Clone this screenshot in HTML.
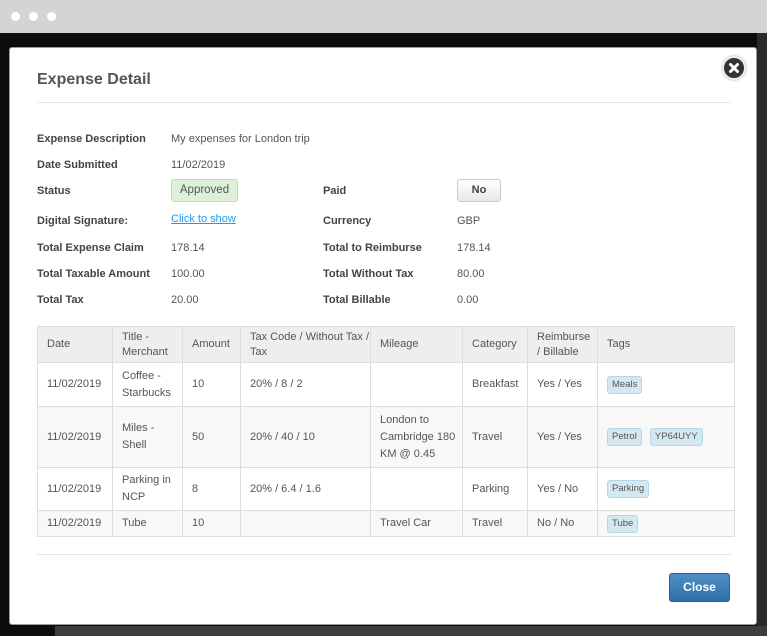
<!DOCTYPE html>
<html><head><meta charset="utf-8"><style>
*{margin:0;padding:0;box-sizing:border-box}
body{width:767px;height:636px;overflow:hidden;background:#0c0d0f;font-family:"Liberation Sans",Arial,sans-serif;color:#555;position:relative}
.top{position:absolute;left:0;top:0;width:767px;height:33px;background:#d4d4d4}
.dot{position:absolute;top:12px;width:9px;height:9px;border-radius:50%;background:#fff}
.bot{position:absolute;left:55px;top:626px;width:712px;height:10px;background:#3c3d3f}
.side{position:absolute;left:757px;top:33px;width:10px;height:603px;background:#2a2a2a}
.modal{position:absolute;left:9px;top:47px;width:748px;height:578px;background:#fff;border:1px solid #999;border-radius:3px}
.a{position:absolute;font-size:11px;line-height:14px;white-space:nowrap}
.b{font-weight:bold;color:#444}
.hr{position:absolute;left:37px;width:694px;height:1px;background:#e5e5e5}
table{position:absolute;left:37px;top:326px;width:697px;border-collapse:collapse;table-layout:fixed;font-size:11px;color:#555}
td,th{border:1px solid #ddd;padding:0 2px 0 9px;text-align:left;font-weight:normal;line-height:17px;vertical-align:middle;overflow:hidden}
th{background:#eeeeee;height:36px;line-height:15px}
tr.s td{background:#f8f8f8}
.tag{display:inline-block;background:#d3e8f1;border:1px solid #b5d6e6;border-radius:3px;font-size:9.5px;line-height:14px;padding:1px 4px;color:#555;margin-right:5px}
</style></head><body>
<div class="top"><div class="dot" style="left:11px"></div><div class="dot" style="left:29px"></div><div class="dot" style="left:47px"></div></div>
<div class="side"></div><div class="bot"></div>
<div class="modal"></div>
<div style="position:absolute;left:722px;top:56px;width:24px;height:24px;border-radius:50%;background:#333;border:2px solid #eee;box-shadow:0 0 2px #aaa"><svg width="20" height="20" viewBox="0 0 20 20" style="position:absolute;left:0;top:0"><path d="M6.5 6.5L13.5 13.5M13.5 6.5L6.5 13.5" stroke="#fff" stroke-width="3" stroke-linecap="round"/></svg></div>
<div class="a b" style="left:37px;top:70px;font-size:16px;line-height:20px;color:#555">Expense Detail</div>
<div class="hr" style="top:102px"></div>

<div class="a b" style="left:37px;top:132px">Expense Description</div><div class="a" style="left:171px;top:132px">My expenses for London trip</div>
<div class="a b" style="left:37px;top:158px">Date Submitted</div><div class="a" style="left:171px;top:158px">11/02/2019</div>
<div class="a b" style="left:37px;top:184px">Status</div>
<div class="a" style="left:171px;top:179px;width:67px;height:23px;background:#dff0d8;border:1px solid #b9dfa8;border-radius:3px;text-align:center;line-height:21px;font-size:11.5px">Approved</div>
<div class="a b" style="left:323px;top:184px">Paid</div>
<div class="a b" style="left:457px;top:179px;width:44px;height:23px;background:linear-gradient(#fff,#e8e8e8);border:1px solid #ccc;border-radius:3px;text-align:center;line-height:21px">No</div>
<div class="a b" style="left:37px;top:214px">Digital Signature:</div><div class="a" style="left:171px;top:212px;color:#1a9cf0;text-decoration:underline">Click to show</div>
<div class="a b" style="left:323px;top:214px">Currency</div><div class="a" style="left:457px;top:214px">GBP</div>
<div class="a b" style="left:37px;top:241px">Total Expense Claim</div><div class="a" style="left:171px;top:241px">178.14</div>
<div class="a b" style="left:323px;top:241px">Total to Reimburse</div><div class="a" style="left:457px;top:241px">178.14</div>
<div class="a b" style="left:37px;top:267px">Total Taxable Amount</div><div class="a" style="left:171px;top:267px">100.00</div>
<div class="a b" style="left:323px;top:267px">Total Without Tax</div><div class="a" style="left:457px;top:267px">80.00</div>
<div class="a b" style="left:37px;top:293px">Total Tax</div><div class="a" style="left:171px;top:293px">20.00</div>
<div class="a b" style="left:323px;top:293px">Total Billable</div><div class="a" style="left:457px;top:293px">0.00</div>

<table>
<colgroup><col style="width:75px"><col style="width:70px"><col style="width:58px"><col style="width:130px"><col style="width:92px"><col style="width:65px"><col style="width:70px"><col style="width:137px"></colgroup>
<tr style="height:36px"><th>Date</th><th>Title -<br>Merchant</th><th>Amount</th><th style="white-space:nowrap">Tax Code / Without Tax /<br>Tax</th><th>Mileage</th><th>Category</th><th>Reimburse<br>/ Billable</th><th>Tags</th></tr>
<tr style="height:44px"><td>11/02/2019</td><td>Coffee -<br>Starbucks</td><td>10</td><td>20% / 8 / 2</td><td></td><td>Breakfast</td><td>Yes / Yes</td><td><span class="tag">Meals</span></td></tr>
<tr class="s" style="height:61px"><td>11/02/2019</td><td>Miles -<br>Shell</td><td>50</td><td>20% / 40 / 10</td><td style="white-space:nowrap">London to<br>Cambridge 180<br>KM @ 0.45</td><td>Travel</td><td>Yes / Yes</td><td style="white-space:nowrap"><span class="tag">Petrol</span> <span class="tag">YP64UYY</span></td></tr>
<tr style="height:43px"><td>11/02/2019</td><td>Parking in<br>NCP</td><td>8</td><td>20% / 6.4 / 1.6</td><td></td><td>Parking</td><td>Yes / No</td><td><span class="tag">Parking</span></td></tr>
<tr class="s" style="height:26px"><td>11/02/2019</td><td>Tube</td><td>10</td><td></td><td>Travel Car</td><td>Travel</td><td>No / No</td><td><span class="tag">Tube</span></td></tr>
</table>
<div class="hr" style="top:554px"></div>
<div class="a b" style="left:669px;top:573px;width:61px;height:29px;background:linear-gradient(#4f8fc6,#2f6ea8);border:1px solid #2a6096;border-radius:3px;color:#fff;text-align:center;line-height:27px;font-size:12px">Close</div>
</body></html>
